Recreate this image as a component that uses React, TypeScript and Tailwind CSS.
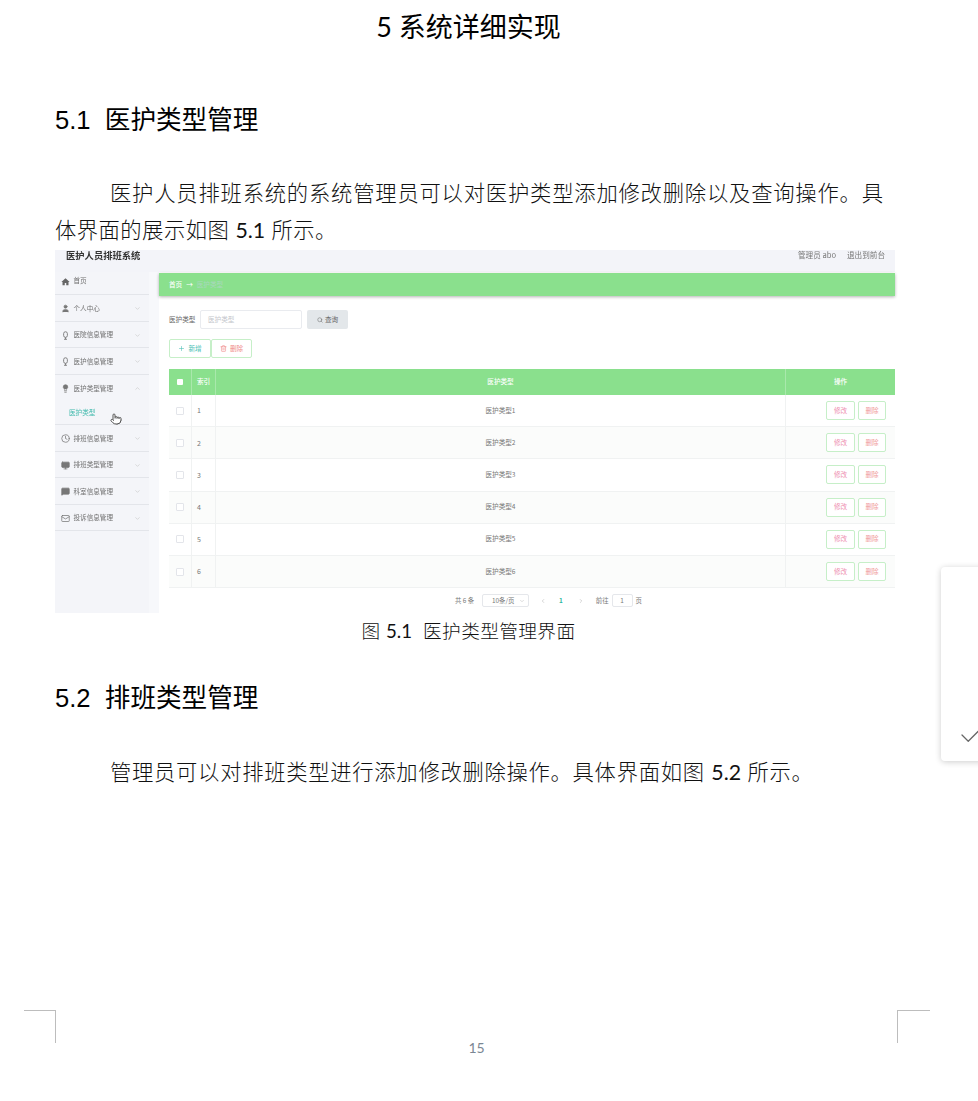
import { ChevronDown, ChevronLeft, ChevronRight, ChevronUp, Check, Clock, Mail, MessageSquare, Monitor, Plus, Pointer, Search, Trash2, User, Lightbulb } from 'lucide-react';

const CJK = 'font-["Noto_Sans_CJK_SC",sans-serif]';

// element-ui style mic, the lucide one turns to mush at this size
const MicIcon = ({ size, className }: { size: number; className?: string }) => (
  <svg width={size} height={size} viewBox="0 0 24 24" fill="none" stroke="currentColor" strokeWidth="2.4" className={className}>
    <rect x="7" y="2" width="10" height="15" rx="5" />
    <path d="M12 17v5M8 22h8" />
  </svg>
);

const HomeIcon = ({ size, className }: { size: number; className?: string }) => (
  <svg width={size} height={size} viewBox="0 0 24 24" fill="currentColor" className={className}>
    <path d="M12 3 1 13h3v9h6v-6h4v6h6v-9h3z" />
  </svg>
);

const menuItems = [
  { label: '个人中心', icon: User, filled: true },
  { label: '医院信息管理', icon: MicIcon },
  { label: '医护信息管理', icon: MicIcon },
];

const menuItemsBottom = [
  { label: '排班信息管理', icon: Clock },
  { label: '排班类型管理', icon: Monitor, filled: true },
  { label: '科室信息管理', icon: MessageSquare, filled: true },
  { label: '投诉信息管理', icon: Mail },
];

const rows = [1, 2, 3, 4, 5, 6];

const MenuRow = ({ item, open }: { item: { label: string; icon: any; filled?: boolean }; open?: boolean }) => {
  const Icon = item.icon;
  return (
    <div className={`h-[26.5px] pt-[2px] flex items-center pl-[6px] pr-[8px] ${open ? '' : 'border-b border-[#e3e5ea]'}`}>
      <Icon size={9} className="text-[#777] mr-[3.5px]" {...(item.filled ? { fill: '#777' } : {})} />
      <span className="text-[6.6px] text-[#707070]">{item.label}</span>
      {open ? (
        <ChevronUp size={7} className="ml-auto text-[#c4c4c4]" />
      ) : (
        <ChevronDown size={7} className="ml-auto text-[#c4c4c4]" />
      )}
    </div>
  );
};

const Sidebar = () => (
  <div className="w-[104px] flex bg-[#f7f8fb]">
    <div className="w-[94px] bg-[#f4f5f9]">
      <div className="h-[23px] pb-[4px] flex items-center pl-[6px] border-b border-[#e3e5ea]">
        <HomeIcon size={9} className="text-[#666] mr-[3.5px]" />
        <span className="text-[6.6px] text-[#707070]">首页</span>
      </div>
      {menuItems.map((item) => (
        <MenuRow key={item.label} item={item} />
      ))}
      <MenuRow item={{ label: '医护类型管理', icon: Lightbulb, filled: true }} open />
      <div className="h-[24px] flex items-center pl-[14px] border-b border-[#e3e5ea] relative">
        <span className="text-[6.6px] text-[#3fb9ac]">医护类型</span>
        <Pointer size={12} className="absolute left-[55px] top-[12px] text-[#555]" fill="#fff" />
      </div>
      {menuItemsBottom.map((item) => (
        <MenuRow key={item.label} item={item} />
      ))}
    </div>
  </div>
);

const TableRow = ({ n }: { n: number }) => (
  <div className={`h-[32.2px] flex border-b border-[#f0f2f2] ${n % 2 === 0 ? 'bg-[#fbfcfb]' : 'bg-white'}`}>
    <div className="w-[23px] flex items-center justify-center border-r border-[#f0f2f2]">
      <div className="w-[8px] h-[8px] border border-[#e3e5ea] rounded-[1px] bg-white" />
    </div>
    <div className="w-[24px] flex items-center pl-[5px] border-r border-[#f0f2f2] text-[7px] text-[#777]">{n}</div>
    <div className="flex-1 flex items-center justify-center border-r border-[#f0f2f2] text-[6.6px] text-[#777]">
      医护类型{n}
    </div>
    <div className="w-[109px] flex items-center pl-[40px] gap-[3px]">
      <div className="w-[29px] h-[19px] flex items-center justify-center border border-[#c6efc8] rounded-[2px] text-[6.6px] text-[#ee8fb0] bg-white">
        修改
      </div>
      <div className="w-[28px] h-[19px] flex items-center justify-center border border-[#c6efc8] rounded-[2px] text-[6.6px] text-[#f09a9a] bg-white">
        删除
      </div>
    </div>
  </div>
);

const Screenshot = () => (
  <div className={`h-[363px] flex flex-col blur-[0.4px] ${CJK}`}>
    <div className="h-[22px] bg-[#f3f4f9] flex pl-[11px] pr-[10px] items-start">
      <span className="text-[9.3px] leading-[10px] font-bold text-[#333]">医护人员排班系统</span>
      <span className="ml-auto text-[7.6px] leading-[9px] text-[#777]">管理员 abo</span>
      <span className="ml-[11px] text-[7.6px] leading-[9px] text-[#777]">退出到前台</span>
    </div>
    <div className="flex-1 flex">
      <Sidebar />
      <div className="flex-1 min-w-0 bg-white pt-px">
        <div className="h-[23px] bg-[#8ae08d] shadow-[0_1px_3px_rgba(0,0,0,0.3)] flex items-center pl-[10px] text-[6.6px]">
          <span className="text-white font-medium">首页</span>
          <span className="text-white mx-[4px]">→</span>
          <span className="text-[#a8d8bd]">医护类型</span>
        </div>
        <div className="pl-[10px]">
          <div className="flex items-center h-[19px] mt-[14px]">
            <span className="text-[6.6px] text-[#666] w-[31px]">医护类型</span>
            <div className="w-[102px] h-[19px] flex items-center pl-[7px] border border-[#e9ebef] rounded-[2px] text-[6.6px] text-[#c4c6cc]">
              医护类型
            </div>
            <div className="ml-[5px] w-[41px] h-[19px] flex items-center justify-center gap-[2px] bg-[#e3e7ea] rounded-[2px] text-[6.6px] text-[#666]">
              <Search size={6} />
              查询
            </div>
          </div>
          <div className="flex mt-[10px]">
            <div className="w-[42px] h-[19px] flex items-center justify-center gap-[3px] border border-[#c6efc8] rounded-[2px] text-[6.6px] text-[#4cbfb5]">
              <Plus size={7} />
              新增
            </div>
            <div className="w-[41px] h-[19px] flex items-center justify-center gap-[3px] border border-[#c6efc8] rounded-[2px] text-[6.6px] text-[#f08a8a]">
              <Trash2 size={7} />
              删除
            </div>
          </div>
          <div className="h-[26px] mt-[11px] flex bg-[#8ae08d] text-white font-medium text-[6.6px]">
            <div className="w-[23px] flex items-center justify-center border-r border-[#a9e8ac]">
              <div className="w-[6px] h-[6px] bg-white rounded-[1px]" />
            </div>
            <div className="w-[24px] flex items-center pl-[5px] border-r border-[#a9e8ac]">索引</div>
            <div className="flex-1 flex items-center justify-center border-r border-[#a9e8ac]">医护类型</div>
            <div className="w-[109px] flex items-center justify-center">操作</div>
          </div>
          {rows.map((n) => (
            <TableRow key={n} n={n} />
          ))}
          <div className="flex items-center h-[13px] mt-[6px] pl-[286px] text-[6.4px] text-[#777]">
            <span className="w-[27px]">共 6 条</span>
            <div className="w-[47px] h-[13px] flex items-center pl-[9px] border border-[#e5e7eb] rounded-[2px]">
              10条/页
              <ChevronDown size={6} className="ml-auto mr-[3px] text-[#bbb]" />
            </div>
            <ChevronLeft size={6} className="ml-[11px] text-[#aaa]" />
            <span className="ml-[13px] font-bold text-[#2fb8a0]">1</span>
            <ChevronRight size={6} className="ml-[15px] text-[#aaa]" />
            <span className="ml-[12px]">前往</span>
            <div className="ml-[3px] w-[21px] h-[13px] flex items-center justify-center border border-[#e5e7eb] rounded-[2px]">1</div>
            <span className="ml-[3px]">页</span>
          </div>
        </div>
      </div>
    </div>
  </div>
);

export default function App() {
  return (
    <div className={`relative h-[1101px] w-[978px] flex flex-col bg-white overflow-hidden text-[#111] ${CJK}`}>
      <div className="flex-1 ml-[55px] w-[840px]">
        <h1 className='h-[54px] leading-[54px] text-center pr-[13px] text-[27px] font-["Lato","Noto_Sans_CJK_SC",sans-serif] text-black'>
          5 系统详细实现
        </h1>
        <h2 className='h-[40px] mt-[46px] leading-[40px] text-[25.6px] font-["Liberation_Sans","Noto_Sans_CJK_SC",sans-serif] text-black'>
          5.1&nbsp;&nbsp;医护类型管理
        </h2>
        <p className='mt-[34.5px] text-[21.33px] leading-[37px] font-["Lato","Noto_Sans_CJK_SC",sans-serif] font-light'>
          <span className="block indent-[55px] tracking-[0.78px]">医护人员排班系统的系统管理员可以对医护类型添加修改删除以及查询操作。具</span>
          <span className="block tracking-[0.45px]">
            体界面的展示如图 <span className="font-normal tracking-normal">5.1</span> 所示。
          </span>
        </p>
        <div className="mt-[1.5px]">
          <Screenshot />
        </div>
        <p className='h-[36px] leading-[36px] text-center pr-[13px] text-[18.67px] tracking-[0.4px] font-["Lato","Noto_Sans_CJK_SC",sans-serif] font-light'>
          图 <span className="font-normal tracking-normal">5.1</span>&nbsp;&nbsp;医护类型管理界面
        </p>
        <h2 className='h-[40px] mt-[29px] leading-[40px] text-[25.6px] font-["Liberation_Sans","Noto_Sans_CJK_SC",sans-serif] text-black'>
          5.2&nbsp;&nbsp;排班类型管理
        </h2>
        <p className='mt-[35.5px] text-[21.33px] leading-[37px] tracking-[0.7px] indent-[55px] font-["Lato","Noto_Sans_CJK_SC",sans-serif] font-light'>
          管理员可以对排班类型进行添加修改删除操作。具体界面如图 <span className="font-normal tracking-normal">5.2</span> 所示。
        </p>
      </div>

      <div className="h-[91px] flex items-start pl-[24px]">
        <div className="w-[32px] h-[33px] border-t border-r border-[#bdbdbd]" />
        <div className='w-[841px] pt-[29px] text-center text-[14px] leading-[18px] text-[#7b8794] font-["Lato",sans-serif]'>15</div>
        <div className="w-[33px] h-[33px] border-t border-l border-[#bdbdbd]" />
      </div>

      {/* toolbar panel sticking in from the right edge */}
      <div className="absolute left-[941px] top-[567px] w-[60px] h-[194px] bg-white rounded-[4px] shadow-[0_1px_6px_rgba(0,0,0,0.2)]">
        <Check size={30} strokeWidth={1} className="absolute left-[16px] top-[153px] text-[#666]" />
      </div>
    </div>
  );
}
